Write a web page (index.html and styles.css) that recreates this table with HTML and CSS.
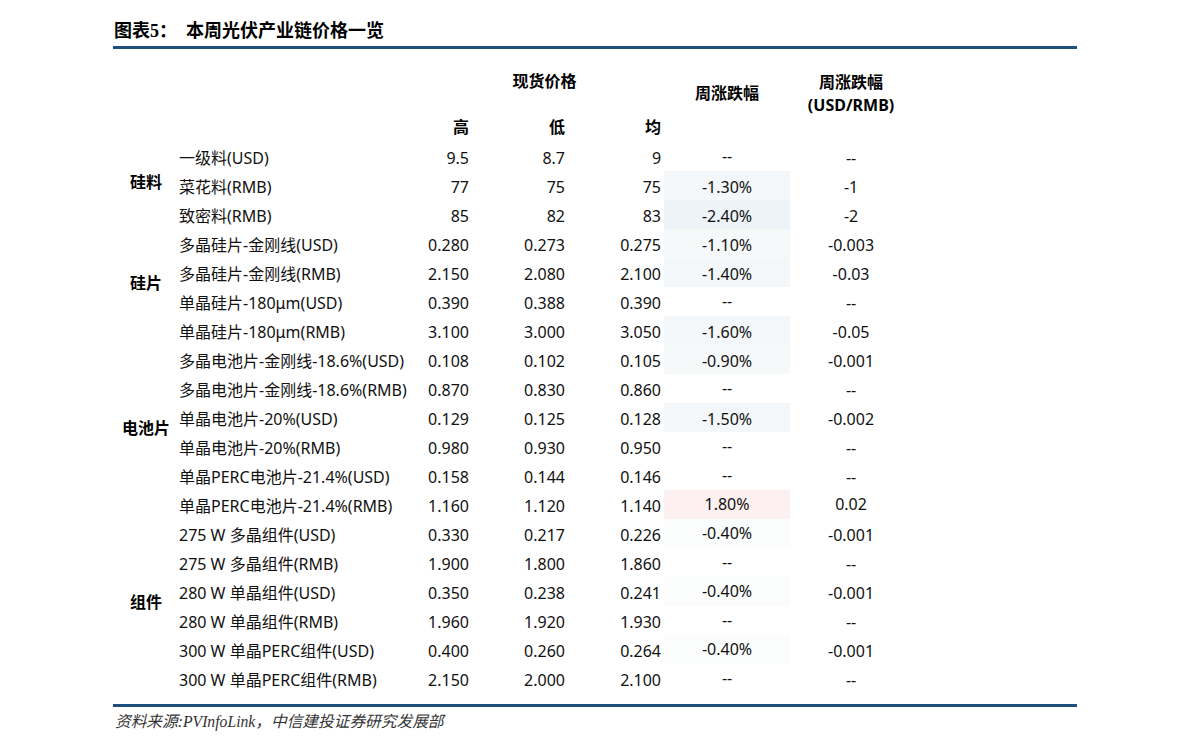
FILE: index.html
```html
<!DOCTYPE html>
<html lang="zh-CN">
<head>
<meta charset="utf-8">
<title>本周光伏产业链价格一览</title>
<link rel="stylesheet" href="styles.css">
</head>
<body>
<div class="page">
  <div class="title"><span class="tnum">图表5：</span><span class="tname">本周光伏产业链价格一览</span></div>
  <table class="prices">
    <colgroup>
      <col class="c-cat"><col class="c-name"><col class="c-hi"><col class="c-lo"><col class="c-avg"><col class="c-chg"><col class="c-chg2"><col class="c-rest">
    </colgroup>
    <thead>
      <tr class="h1">
        <th></th><th></th>
        <th colspan="3" class="spot">现货价格</th>
        <th rowspan="2" class="chg">周涨跌幅</th>
        <th rowspan="2" class="chg2">周涨跌幅<br>(USD/RMB)</th>
        <th></th>
      </tr>
      <tr class="h2">
        <th></th><th></th>
        <th class="num">高</th><th class="num">低</th><th class="num">均</th>
        <th></th>
      </tr>
    </thead>
    <tbody>
      <tr><td rowspan="3" class="cat">硅料</td><td class="name">一级料(USD)</td><td class="num">9.5</td><td class="num">8.7</td><td class="num">9</td><td class="chg dash">--</td><td class="chg2">--</td><td></td></tr>
      <tr><td class="name">菜花料(RMB)</td><td class="num">77</td><td class="num">75</td><td class="num">75</td><td class="chg s-a">-1.30%</td><td class="chg2">-1</td><td></td></tr>
      <tr><td class="name">致密料(RMB)</td><td class="num">85</td><td class="num">82</td><td class="num">83</td><td class="chg s-b">-2.40%</td><td class="chg2">-2</td><td></td></tr>

      <tr><td rowspan="4" class="cat">硅片</td><td class="name">多晶硅片-金刚线(USD)</td><td class="num">0.280</td><td class="num">0.273</td><td class="num">0.275</td><td class="chg s-c">-1.10%</td><td class="chg2">-0.003</td><td></td></tr>
      <tr><td class="name">多晶硅片-金刚线(RMB)</td><td class="num">2.150</td><td class="num">2.080</td><td class="num">2.100</td><td class="chg s-a">-1.40%</td><td class="chg2">-0.03</td><td></td></tr>
      <tr><td class="name">单晶硅片-180μm(USD)</td><td class="num">0.390</td><td class="num">0.388</td><td class="num">0.390</td><td class="chg dash">--</td><td class="chg2">--</td><td></td></tr>
      <tr><td class="name">单晶硅片-180μm(RMB)</td><td class="num">3.100</td><td class="num">3.000</td><td class="num">3.050</td><td class="chg s-a">-1.60%</td><td class="chg2">-0.05</td><td></td></tr>

      <tr><td rowspan="6" class="cat">电池片</td><td class="name">多晶电池片-金刚线-18.6%(USD)</td><td class="num">0.108</td><td class="num">0.102</td><td class="num">0.105</td><td class="chg s-c">-0.90%</td><td class="chg2">-0.001</td><td></td></tr>
      <tr><td class="name">多晶电池片-金刚线-18.6%(RMB)</td><td class="num">0.870</td><td class="num">0.830</td><td class="num">0.860</td><td class="chg dash">--</td><td class="chg2">--</td><td></td></tr>
      <tr><td class="name">单晶电池片-20%(USD)</td><td class="num">0.129</td><td class="num">0.125</td><td class="num">0.128</td><td class="chg s-a">-1.50%</td><td class="chg2">-0.002</td><td></td></tr>
      <tr><td class="name">单晶电池片-20%(RMB)</td><td class="num">0.980</td><td class="num">0.930</td><td class="num">0.950</td><td class="chg dash">--</td><td class="chg2">--</td><td></td></tr>
      <tr><td class="name">单晶PERC电池片-21.4%(USD)</td><td class="num">0.158</td><td class="num">0.144</td><td class="num">0.146</td><td class="chg dash">--</td><td class="chg2">--</td><td></td></tr>
      <tr><td class="name">单晶PERC电池片-21.4%(RMB)</td><td class="num">1.160</td><td class="num">1.120</td><td class="num">1.140</td><td class="chg s-up up">1.80%</td><td class="chg2 up">0.02</td><td></td></tr>

      <tr><td rowspan="6" class="cat">组件</td><td class="name">275 W 多晶组件(USD)</td><td class="num">0.330</td><td class="num">0.217</td><td class="num">0.226</td><td class="chg s-d up">-0.40%</td><td class="chg2">-0.001</td><td></td></tr>
      <tr><td class="name">275 W 多晶组件(RMB)</td><td class="num">1.900</td><td class="num">1.800</td><td class="num">1.860</td><td class="chg dash">--</td><td class="chg2">--</td><td></td></tr>
      <tr><td class="name">280 W 单晶组件(USD)</td><td class="num">0.350</td><td class="num">0.238</td><td class="num">0.241</td><td class="chg s-d up">-0.40%</td><td class="chg2">-0.001</td><td></td></tr>
      <tr><td class="name">280 W 单晶组件(RMB)</td><td class="num">1.960</td><td class="num">1.920</td><td class="num">1.930</td><td class="chg dash">--</td><td class="chg2">--</td><td></td></tr>
      <tr><td class="name">300 W 单晶PERC组件(USD)</td><td class="num">0.400</td><td class="num">0.260</td><td class="num">0.264</td><td class="chg s-d up">-0.40%</td><td class="chg2">-0.001</td><td></td></tr>
      <tr><td class="name">300 W 单晶PERC组件(RMB)</td><td class="num">2.150</td><td class="num">2.000</td><td class="num">2.100</td><td class="chg dash">--</td><td class="chg2">--</td><td></td></tr>
    </tbody>
  </table>
  <div class="source">资料来源:PVInfoLink，中信建投证券研究发展部</div>
</div>
</body>
</html>
```

FILE: styles.css
```css
html, body {
  margin: 0;
  padding: 0;
  background: #ffffff;
}

body {
  font-family: "Noto Sans", "Noto Sans CJK SC", sans-serif;
  color: #111111;
}

.page {
  width: 964px;
  margin-left: 113px;
}

.title {
  padding-top: 18px;
  padding-bottom: 4px;
  padding-left: 1px;
  line-height: 22px;
  font-size: 18px;
  font-weight: bold;
  color: #000000;
  border-bottom: 3px solid #1d4f7e;
  font-family: "Liberation Serif", "Noto Sans CJK SC", serif;
}

.tname {
  margin-left: 9px;
  font-family: "Noto Sans CJK SC", sans-serif;
}

.prices {
  width: 964px;
  table-layout: fixed;
  border-collapse: collapse;
  border-spacing: 0;
  font-size: 16px;
}

.c-cat { width: 66px; }
.c-name { width: 246px; }
.c-hi { width: 47px; }
.c-lo { width: 96px; }
.c-avg { width: 96px; }
.c-chg { width: 126px; }
.c-chg2 { width: 122px; }
.c-rest { width: 165px; }

.prices th,
.prices td {
  padding: 0;
  white-space: nowrap;
}

.prices th {
  font-weight: bold;
  color: #000000;
  line-height: 20px;
  font-family: "Noto Sans", "Noto Sans CJK SC", sans-serif;
}

.h1 { height: 68px; }
.h2 { height: 25px; }

.h1 th.spot {
  text-align: center;
  vertical-align: middle;
  padding-bottom: 5px;
}

.prices th.chg,
.prices th.chg2 {
  text-align: center;
  vertical-align: middle;
  line-height: 23px;
  padding-bottom: 4px;
}

.prices th.num {
  text-align: right;
  padding-right: 3px;
  padding-bottom: 5px;
  vertical-align: middle;
}

.prices tbody tr {
  height: 29px;
}

.prices tbody td {
  vertical-align: middle;
  padding-top: 2px;
  line-height: 20px;
}

.prices td.cat {
  text-align: center;
  font-weight: bold;
  color: #000000;
  padding-top: 0;
  padding-bottom: 8px;
}

.prices td.name {
  text-align: left;
}

.prices td.num {
  text-align: right;
  padding-right: 3px;
}

.prices td.chg,
.prices td.chg2 {
  text-align: center;
}

.prices td.dash {
  padding-top: 0;
  padding-bottom: 2px;
}

.prices td.up {
  padding-top: 0;
  padding-bottom: 2px;
}

.s-a { background: #f3f7f9; }
.s-b { background: #edf3f6; }
.s-c { background: #f6f9fa; }
.s-d { background: #fafdfc; }
.s-up { background: #fdf0f0; }

.source {
  margin-top: 11px;
  border-top: 3px solid #1d4f7e;
  padding-top: 5px;
  padding-left: 2px;
  line-height: 20px;
  font-size: 15.7px;
  font-style: italic;
  color: #333333;
  font-family: "Liberation Serif", "Noto Sans CJK SC", serif;
}
```
